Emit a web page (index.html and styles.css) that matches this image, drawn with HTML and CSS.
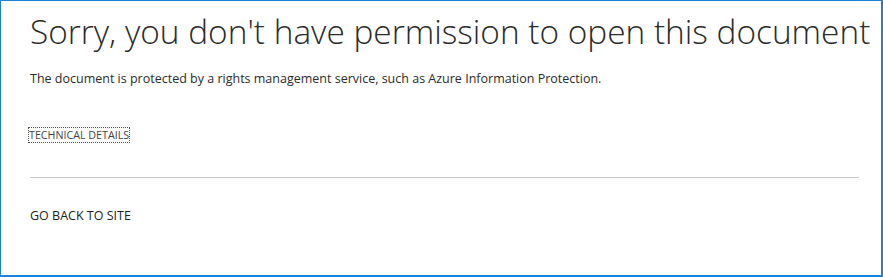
FILE: index.html
```html
<!DOCTYPE html>
<html>
<head>
<meta charset="utf-8">
<link rel="stylesheet" href="styles.css">
</head>
<body>
<div class="frame">
  <div class="content">
    <h1 class="title">Sorry, you don't have permission to open this document</h1>
    <p class="message">The document is protected by a rights management service, such as Azure Information Protection.</p>
    <div class="details-row"><a class="details" href="#">TECHNICAL DETAILS</a></div>
    <hr class="divider">
    <a class="back" href="#">GO BACK TO SITE</a>
  </div>
</div>
</body>
</html>
```
FILE: styles.css
```css
html, body {
  margin: 0;
  padding: 0;
  background: #ffffff;
}
.frame {
  box-sizing: border-box;
  width: 883px;
  height: 277px;
  border-style: solid;
  border-color: #1883d7;
  border-width: 1px 2px 2px 1px;
  background: #fff;
  overflow: hidden;
}
.content {
  padding: 8px 0 0 29px;
  width: 829px;
  font-family: "Open Sans", "Noto Sans", sans-serif;
  color: #333333;
}
.title {
  margin: 0;
  font-weight: 300;
  font-size: 33.4px;
  line-height: 44px;
  color: #2b2b2b;
  white-space: nowrap;
}
.message {
  margin: 18px 0 0 0;
  font-size: 12.5px;
  line-height: 16px;
  color: #2b2b2b;
  white-space: nowrap;
}
.details-row {
  margin-top: 39px;
  line-height: 14px;
}
.details {
  display: inline-block;
  margin-left: -1px;
  font-size: 10.7px;
  line-height: 14px;
  color: #444;
  text-decoration: none;
  outline: 1px dotted #555;
}
.divider {
  margin: 35px 0 0 0;
  border: 0;
  border-top: 1px solid #c8c8c8;
  height: 0;
}
.back {
  display: block;
  margin-top: 30px;
  font-size: 12.5px;
  line-height: 16px;
  color: #222;
  text-decoration: none;
}
```
